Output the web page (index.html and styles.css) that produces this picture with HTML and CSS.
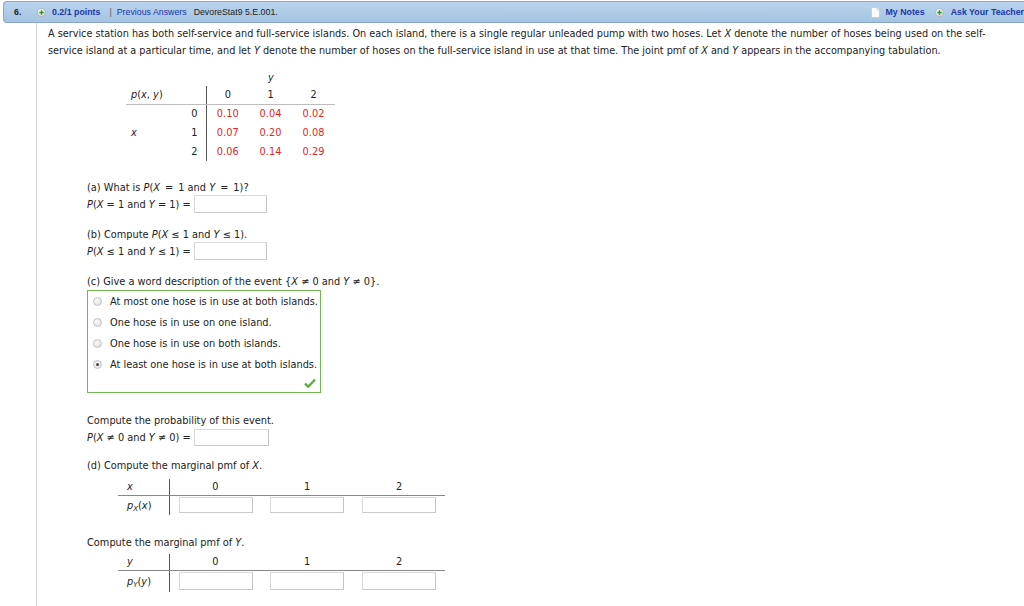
FILE: index.html
```html
<!DOCTYPE html>
<html>
<head>
<meta charset="utf-8">
<link rel="stylesheet" href="styles.css">
</head>
<body>
<div class="header">
  <span class="hnum">6.</span>
  <svg class="plus" viewBox="0 0 10 10" width="9" height="9"><defs><radialGradient id="pg" cx="40%" cy="35%" r="65%"><stop offset="0" stop-color="#ffffff"/><stop offset="1" stop-color="#cfcfcf"/></radialGradient></defs><circle cx="5" cy="5" r="4.5" fill="url(#pg)" stroke="#a8a8a8" stroke-width="0.6"/><path d="M5 2.6v4.8M2.6 5h4.8" stroke="#1f9a25" stroke-width="1.5"/></svg>
  <span class="hpoints">0.2/1 points</span>
  <span class="hsep">|</span>
  <span class="hprev">Previous Answers</span>
  <span class="hcode">DevoreStat9 5.E.001.</span>
  <span class="hright">
    <svg class="doc" viewBox="0 0 9 11" width="9" height="11"><path d="M0.5 0.5h5.5l2.5 2.5v7.5h-8z" fill="#fbfbfb" stroke="#c9c9c9" stroke-width="0.8"/><path d="M6 0.5v2.5h2.5" fill="#e6e6e6" stroke="#c9c9c9" stroke-width="0.6"/></svg>
    <span class="hlink">My Notes</span>
    <svg class="plus" viewBox="0 0 10 10" width="9" height="9"><circle cx="5" cy="5" r="4.5" fill="url(#pg)" stroke="#a8a8a8" stroke-width="0.6"/><path d="M5 2.6v4.8M2.6 5h4.8" stroke="#1f9a25" stroke-width="1.5"/></svg>
    <span class="hlink">Ask Your Teacher</span>
  </span>
</div>

<div class="content">
  <p class="intro">A service station has both self-service and full-service islands. On each island, there is a single regular unleaded pump with two hoses. Let <i>X</i> denote the number of hoses being used on the self-service island at a particular time, and let <i>Y</i> denote the number of hoses on the full-service island in use at that time. The joint pmf of <i>X</i> and <i>Y</i> appears in the accompanying tabulation.</p>

  <div class="joint-y"><i>y</i></div>
  <table class="joint">
    <tr class="jhead">
      <td class="plabel"><i>p</i>(<i>x</i>, <i>y</i>)</td>
      <td class="rl"></td>
      <td class="c vl">0</td><td class="c">1</td><td class="c">2</td>
    </tr>
    <tr>
      <td class="plabel"></td><td class="rl">0</td>
      <td class="c vl red">0.10</td><td class="c red">0.04</td><td class="c red">0.02</td>
    </tr>
    <tr>
      <td class="plabel"><i>x</i></td><td class="rl">1</td>
      <td class="c vl red">0.07</td><td class="c red">0.20</td><td class="c red">0.08</td>
    </tr>
    <tr>
      <td class="plabel"></td><td class="rl">2</td>
      <td class="c vl red">0.06</td><td class="c red">0.14</td><td class="c red">0.29</td>
    </tr>
  </table>

  <div class="questions">
    <div class="qa">
      <div class="qtitle">(a) What is <i>P</i>(<i>X</i><span class="op">=</span>1 and <i>Y</i><span class="op">=</span>1)?</div>
      <div class="qrow"><span><i>P</i>(<i>X</i> = 1 and <i>Y</i> = 1) =</span><span class="inp w73"></span></div>
    </div>
    <div class="qb">
      <div class="qtitle">(b) Compute <i>P</i>(<i>X</i> ≤ 1 and <i>Y</i> ≤ 1).</div>
      <div class="qrow"><span><i>P</i>(<i>X</i> ≤ 1 and <i>Y</i> ≤ 1) =</span><span class="inp w73"></span></div>
    </div>
    <div class="qc">
      <div class="qtitle">(c) Give a word description of the event {<i>X</i> ≠ 0 and <i>Y</i> ≠ 0}.</div>
      <div class="choices">
        <div class="opt"><span class="radio"></span>At most one hose is in use at both islands.</div>
        <div class="opt"><span class="radio"></span>One hose is in use on one island.</div>
        <div class="opt"><span class="radio"></span>One hose is in use on both islands.</div>
        <div class="opt"><span class="radio on"></span>At least one hose is in use at both islands.</div>
        <div class="checkrow"><svg viewBox="0 0 12 10" width="12" height="10"><path d="M1 5.5l3.2 3.2L11 1.5" fill="none" stroke="#5aae3a" stroke-width="2.4" stroke-linejoin="round"/></svg></div>
      </div>
    </div>
    <div class="qp">
      <div class="qtitle">Compute the probability of this event.</div>
      <div class="qrow"><span><i>P</i>(<i>X</i> ≠ 0 and <i>Y</i> ≠ 0) =</span><span class="inp w75"></span></div>
    </div>
    <div class="qd">
      <div class="qtitle">(d) Compute the marginal pmf of <i>X</i>.</div>
      <table class="marg mx">
        <tr class="mhead"><td class="ml"><i>x</i></td><td class="mc vl">0</td><td class="mc">1</td><td class="mc">2</td></tr>
        <tr class="mrow"><td class="ml"><i>p</i><sub><i>X</i></sub>(<i>x</i>)</td><td class="mc vl"><span class="inp w74"></span></td><td class="mc"><span class="inp w74"></span></td><td class="mc"><span class="inp w74"></span></td></tr>
      </table>
    </div>
    <div class="qy">
      <div class="qtitle">Compute the marginal pmf of <i>Y</i>.</div>
      <table class="marg my">
        <tr class="mhead"><td class="ml"><i>y</i></td><td class="mc vl">0</td><td class="mc">1</td><td class="mc">2</td></tr>
        <tr class="mrow"><td class="ml"><i>p</i><sub><i>Y</i></sub>(<i>y</i>)</td><td class="mc vl"><span class="inp w74 tall"></span></td><td class="mc"><span class="inp w74 tall"></span></td><td class="mc"><span class="inp w74 tall"></span></td></tr>
      </table>
    </div>
  </div>
</div>
</body>
</html>
```

FILE: styles.css
```css
* { box-sizing: border-box; }
html, body { margin: 0; padding: 0; }
body {
  width: 1024px;
  height: 606px;
  overflow: hidden;
  background: #fff;
  color: #222;
  font-family: "DejaVu Sans", Verdana, sans-serif;
  font-size: 9.8px;
}

/* header bar */
.header {
  margin: 1px 0 0 3px;
  height: 22px;
  display: flex;
  align-items: center;
  background: linear-gradient(#b9d4ec, #a4c4e3);
  border: 1px solid #89a7c6;
  border-right: none;
  border-radius: 4px 0 0 4px;
  padding-left: 10px;
  font-family: "Liberation Sans", Arial, sans-serif;
  font-size: 8.8px;
  white-space: nowrap;
}
.hnum { font-weight: bold; color: #222; width: 23px; }
.plus { display: block; flex: none; }
.hpoints { font-weight: bold; color: #1b36a8; margin-left: 6px; }
.hsep { color: #555; margin-left: 9px; }
.hprev { color: #1b36a8; margin-left: 5px; }
.hcode { color: #222; margin-left: 7px; }
.hright { margin-left: auto; display: flex; align-items: center; gap: 6px; }
.hlink { font-weight: bold; color: #1b36a8; }
.hright .plus { margin-left: 4px; margin-right: 1px; }

/* content */
.content {
  margin-left: 36px;
  border-left: 1px solid #d2d2d2;
  padding: 2px 0 0 11px;
  height: 583px;
}
.intro { margin: 0; width: 952px; line-height: 17px; font-size: 9.7px; }

.joint-y {
  margin: 11px 0 0 78px;
  width: 210px;
  padding-left: 80px;
  text-align: center;
  line-height: 16px;
}
.joint { margin-left: 78px; border-collapse: collapse; border-spacing: 0; }
.joint td { padding: 0; height: 19px; }
.joint .jhead td { height: 18px; border-bottom: 1px solid #bdbdbd; }
.plabel { width: 59px; padding-left: 5px !important; }
.rl { width: 21px; text-align: right; padding-right: 8px !important; }
.c { width: 43px; text-align: center; }
.joint .vl { border-left: 1px solid #555; }
.red { color: #e0261f; }

/* questions */
.questions { margin-left: 39px; padding-top: 20px; }
.qtitle { line-height: 14px; }
.op { margin: 0 5px; }
.qrow { display: flex; align-items: center; gap: 3px; height: 18px; }
.inp {
  display: inline-block;
  height: 18px;
  background: #fff;
  border: 1px solid #dadada;
  border-right-color: #c4c4c4;
  border-bottom-color: #c9c9c9;
}
.w73 { width: 73px; }
.w74 { width: 74px; height: 16px; }
.w75 { width: 75px; height: 17px; }
.tall { height: 18px; }

.qb { margin-top: 15px; }
.qc { margin-top: 15px; }
.choices {
  margin-top: 1px;
  width: 234px;
  border: 1px solid #72b852;
}
.opt { height: 21px; display: flex; align-items: center; padding-left: 5px; }
.radio {
  width: 9px; height: 9px;
  border-radius: 50%;
  border: 1px solid #c2c2c2;
  background: radial-gradient(circle at 40% 35%, #fafafa, #dcdcdc);
  margin-right: 8px;
  flex: none;
  position: relative;
}
.radio.on::after {
  content: "";
  position: absolute;
  left: 2px; top: 2px;
  width: 3px; height: 3px;
  border-radius: 50%;
  background: #444;
}
.checkrow { height: 17px; display: flex; justify-content: flex-end; align-items: center; padding-right: 4px; padding-bottom: 2px; }
.checkrow svg { display: block; }

.qp { margin-top: 21px; }
.qp .qrow { height: 18px; }
.qd { margin-top: 13px; }
.qy { margin-top: 21px; }

.marg { margin-left: 31px; border-collapse: collapse; border-spacing: 0; }
.marg td { padding: 0; }
.mx { margin-top: 6px; }
.my { margin-top: 4px; }
.mhead td { height: 16px; border-bottom: 1px solid #888; line-height: 15px; }
.mx .mrow td { height: 20px; }
.my .mrow td { height: 22px; }
.ml { width: 51px; padding-left: 9px !important; }
.mc { width: 92px; text-align: center; }
.mrow .mc { text-align: left; padding-left: 9px !important; }
.mrow .inp { vertical-align: middle; }
.marg .vl { border-left: 1px solid #555; }
sub { font-size: 7px; vertical-align: -2px; line-height: 0; }
```
